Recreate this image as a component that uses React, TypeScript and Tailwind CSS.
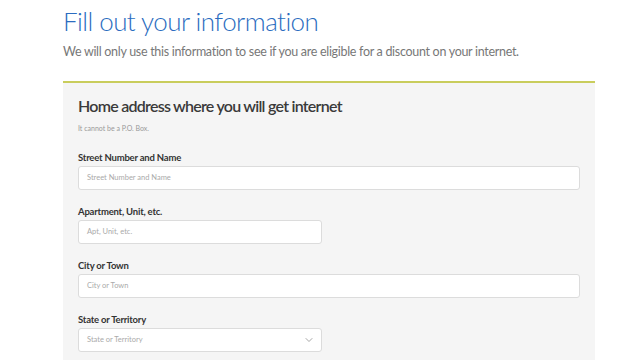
import React from 'react';
import { ChevronDown } from 'lucide-react';

const font = { fontFamily: 'Lato, "Noto Sans", sans-serif' };

function Field({ label, placeholder, wide, select }: { label: string; placeholder: string; wide?: boolean; select?: boolean }) {
  return (
    <div className="mt-[16px] first:mt-0">
      <label className="block text-[9.5px] font-bold text-[#333] leading-[12px] mb-[2px] tracking-[-0.2px]">{label}</label>
      <div
        className={`h-[24px] bg-white border border-[#dcdcdc] rounded-[3px] flex items-center justify-between pl-[8px] pr-[6px] ${
          wide ? 'w-[502px]' : 'w-[244px]'
        }`}
      >
        <span className="text-[7.5px] text-[#aaa]">{placeholder}</span>
        {select && <ChevronDown className="w-[12px] h-[12px] text-[#888]" strokeWidth={1.5} />}
      </div>
    </div>
  );
}

export default function App() {
  return (
    <div className="w-[640px] h-[360px] overflow-hidden bg-white" style={font}>
      <div className="pl-[63px] pr-[45px] pt-[4px]">
        <h1 className="text-[26px] font-light text-[#2b6cc0] leading-[34px] tracking-[-0.55px]">Fill out your information</h1>
        <p className="text-[12.5px] text-[#777] mt-[6px] leading-[16px] tracking-[-0.3px]">
          We will only use this information to see if you are eligible for a discount on your internet.
        </p>
        <div className="mt-[21px] border-t-2 border-[#c9cd5c] bg-[#f5f5f5] h-[300px] px-[15px] pt-[12px]">
          <h2 className="text-[16px] font-semibold text-[#3a3a3a] leading-[22px] tracking-[-0.75px]">Home address where you will get internet</h2>
          <p className="text-[7px] text-[#999] mt-[6px] leading-[10px]">It cannot be a P.O. Box.</p>
          <div className="mt-[19px]">
            <Field label="Street Number and Name" placeholder="Street Number and Name" wide />
            <Field label="Apartment, Unit, etc." placeholder="Apt, Unit, etc." />
            <Field label="City or Town" placeholder="City or Town" wide />
            <Field label="State or Territory" placeholder="State or Territory" select />
          </div>
        </div>
      </div>
    </div>
  );
}
